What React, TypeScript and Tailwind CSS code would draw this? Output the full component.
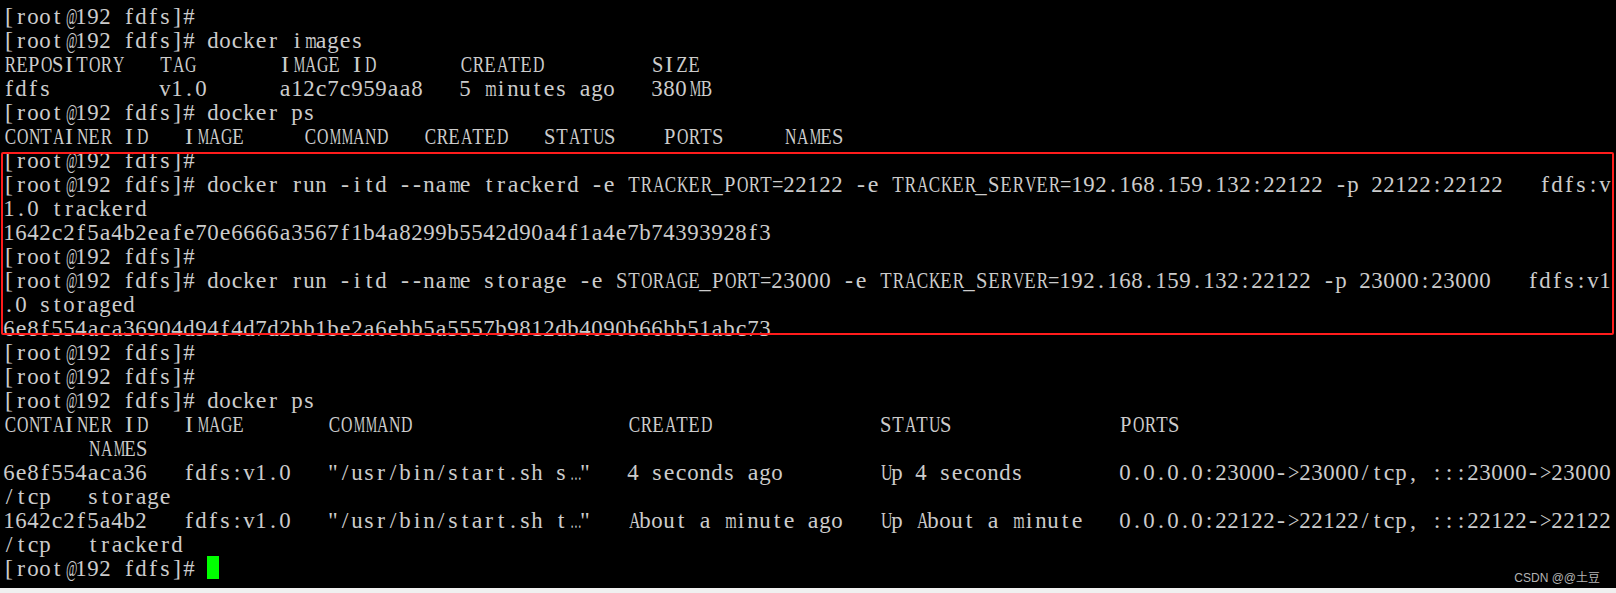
import React from 'react';

// Liberation Serif advance widths (1/1000 em), used to squeeze wide glyphs into a 12px cell
const W: Record<string, number> = {
  ' ': 250, '!': 333, '"': 408, '#': 500, '$': 500, '%': 833, '&': 778, "'": 180, '(': 333, ')': 333,
  '*': 500, '+': 564, ',': 250, '-': 333, '.': 250, '/': 278, ':': 278, ';': 278, '<': 564, '=': 564,
  '>': 564, '?': 444, '@': 921, '[': 333, '\\': 278, ']': 333, '^': 469, _: 500, '`': 333, '…': 1000,
  A: 722, B: 667, C: 667, D: 722, E: 611, F: 556, G: 722, H: 722, I: 333, J: 389, K: 722, L: 611, M: 889,
  N: 722, O: 722, P: 556, Q: 722, R: 667, S: 556, T: 611, U: 722, V: 722, W: 944, X: 722, Y: 722, Z: 611,
  a: 444, b: 500, c: 444, d: 500, e: 444, f: 333, g: 500, h: 500, i: 278, j: 278, k: 500, l: 278, m: 778,
  n: 500, o: 500, p: 500, q: 500, r: 333, s: 389, t: 278, u: 500, v: 500, w: 722, x: 500, y: 500, z: 444,
};

const FS = 24;
const CELL = 11.4;

const row = (cells: [string, number][]) => cells.map(([t, w]) => t.padEnd(w)).join('');

const PROMPT = '[root@192 fdfs]#';

const lines: string[] = [
  PROMPT,
  `${PROMPT} docker images`,
  row([['REPOSITORY', 13], ['TAG', 10], ['IMAGE ID', 15], ['CREATED', 16], ['SIZE', 0]]),
  row([['fdfs', 13], ['v1.0', 10], ['a12c7c959aa8', 15], ['5 minutes ago', 16], ['380MB', 0]]),
  `${PROMPT} docker ps`,
  row([['CONTAINER ID', 15], ['IMAGE', 10], ['COMMAND', 10], ['CREATED', 10], ['STATUS', 10], ['PORTS', 10], ['NAMES', 0]]),
  PROMPT,
  `${PROMPT} docker run -itd --name trackerd -e TRACKER_PORT=22122 -e TRACKER_SERVER=192.168.159.132:22122 -p 22122:22122   fdfs:v`,
  '1.0 trackerd',
  '1642c2f5a4b2eafe70e6666a3567f1b4a8299b5542d90a4f1a4e7b74393928f3',
  PROMPT,
  `${PROMPT} docker run -itd --name storage -e STORAGE_PORT=23000 -e TRACKER_SERVER=192.168.159.132:22122 -p 23000:23000   fdfs:v1`,
  '.0 storaged',
  '6e8f554aca36904d94f4d7d2bb1be2a6ebb5a5557b9812db4090b66bb51abc73',
  PROMPT,
  PROMPT,
  `${PROMPT} docker ps`,
  row([['CONTAINER ID', 15], ['IMAGE', 12], ['COMMAND', 25], ['CREATED', 21], ['STATUS', 20], ['PORTS', 0]]),
  '       NAMES',
  row([['6e8f554aca36', 15], ['fdfs:v1.0', 12], ['"/usr/bin/start.sh s…"', 25], ['4 seconds ago', 21], ['Up 4 seconds', 20], ['0.0.0.0:23000->23000/tcp, :::23000->23000', 0]]),
  '/tcp   storage',
  row([['1642c2f5a4b2', 15], ['fdfs:v1.0', 12], ['"/usr/bin/start.sh t…"', 25], ['About a minute ago', 21], ['Up About a minute', 20], ['0.0.0.0:22122->22122/tcp, :::22122->22122', 0]]),
  '/tcp   trackerd',
];

function Cell({ ch }: { ch: string }) {
  if (ch === ' ') return <span className="inline-block w-[12px] h-[24px] align-top" />;
  const px = ((W[ch] ?? 500) * FS) / 1000;
  const s = px > CELL ? CELL / px : 1;
  return (
    <span
      className="inline-block w-[12px] h-[24px] align-top text-center overflow-visible"
      style={s < 1 ? { transform: `scaleX(${s.toFixed(3)})` } : undefined}
    >
      {ch}
    </span>
  );
}

function Line({ text, cursor }: { text: string; cursor?: boolean }) {
  return (
    <div className="h-[24px] leading-[24px] whitespace-nowrap">
      {Array.from(text).map((ch, i) => (
        <Cell key={i} ch={ch} />
      ))}
      {cursor && <span className="inline-block w-[12px] h-[23px] align-top bg-[#00ff00]" />}
    </div>
  );
}

export default function App() {
  return (
    <div className="w-[1616px] h-[593px] bg-black flex flex-col relative overflow-hidden">
      <div
        className="flex-1 pt-[4px] pl-[3px] text-[24px] text-[#cccccc] overflow-hidden"
        style={{ fontFamily: '"Liberation Serif", "Noto Sans CJK SC", serif' }}
      >
        {lines.map((l, i) => (
          <Line key={i} text={l} />
        ))}
        <Line text={`${PROMPT} `} cursor />
      </div>
      <div className="h-[5px] bg-[#f0f0f0]" />

      {/* red highlight box */}
      <div className="absolute left-[1px] top-[152px] w-[1613px] h-[183px] border-2 border-[#ff1c1c] rounded-[2px] pointer-events-none" />

      {/* watermark */}
      <div
        className="absolute right-[16px] bottom-[7px] text-[12px] leading-[16px] text-[#b4b4b4]"
        style={{ fontFamily: '"Liberation Sans", "Noto Sans CJK SC", sans-serif' }}
      >
        CSDN @@土豆
      </div>
    </div>
  );
}
